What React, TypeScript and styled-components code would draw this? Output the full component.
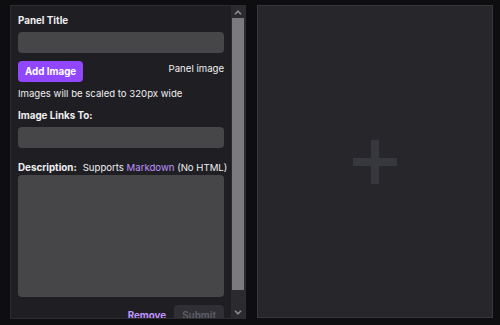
import React from 'react';
import styled, { createGlobalStyle } from 'styled-components';

const GlobalStyle = createGlobalStyle`
  html, body {
    margin: 0;
    padding: 0;
    background: #0e0e10;
    font-family: Inter, "Noto Sans", sans-serif;
    color: #efeff1;
  }
`;

const Page = styled.div`
  display: flex;
  gap: 11px;
  padding: 5px 7px 6px 10px;
  height: 325px;
  box-sizing: border-box;
`;

const EditPanel = styled.div`
  width: 236px;
  height: 314px;
  box-sizing: border-box;
  background: #1f1f23;
  border: 1px solid #2c2c31;
  display: flex;
  overflow: hidden;
`;

const Form = styled.div`
  flex: 1;
  display: flex;
  flex-direction: column;
  padding: 7px 7px 8px 7px;
  min-width: 0;

  & > * {
    flex-shrink: 0;
  }
`;

const Scrollbar = styled.div`
  width: 14px;
  flex: none;
  display: flex;
  flex-direction: column;
  background: #2a2a2f;
`;

const ScrollArrow = styled.div`
  height: 12px;
  flex: none;
  display: flex;
  align-items: center;
  justify-content: center;
`;

const Thumb = styled.div`
  height: 272px;
  flex: none;
  margin: 0 1px;
  background: #7b7b7f;
`;

const Track = styled.div`
  flex: 1;
`;

const Label = styled.div<{ gap?: number }>`
  font-size: 9.8px;
  font-weight: 700;
  line-height: 15px;
  white-space: nowrap;
  margin-bottom: ${(p) => p.gap ?? 4}px;
`;

const Input = styled.div`
  height: 21px;
  border-radius: 4px;
  background: #464649;
`;

const TextArea = styled.div`
  height: 122px;
  border-radius: 4px;
  background: #464649;
`;

const ImageRow = styled.div`
  display: flex;
  justify-content: space-between;
  align-items: flex-start;
  margin-top: 8px;
`;

const PrimaryButton = styled.button`
  height: 21px;
  padding: 0 7px;
  border: none;
  border-radius: 4px;
  background: #9147ff;
  color: #fff;
  font-family: inherit;
  font-size: 9.8px;
  font-weight: 700;
`;

const Hint = styled.div`
  font-size: 9.6px;
  line-height: 15px;
  white-space: nowrap;
`;

const Help = styled(Hint)`
  margin: 4px 0 7px;
`;

const DescRow = styled.div`
  display: flex;
  align-items: baseline;
  gap: 6px;
  margin-top: 12px;
`;

const Link = styled.span`
  color: #bf94ff;
`;

const Actions = styled.div`
  display: flex;
  justify-content: flex-end;
  align-items: center;
  gap: 8px;
  margin-top: 8px;
`;

const TextButton = styled.span`
  color: #bf94ff;
  font-size: 9.8px;
  font-weight: 700;
`;

const DisabledButton = styled.button`
  height: 21px;
  padding: 0 8px;
  border: none;
  border-radius: 4px;
  background: #2f2f35;
  color: #5c5c63;
  font-family: inherit;
  font-size: 9.8px;
  font-weight: 700;
`;

const PreviewPanel = styled.div`
  width: 236px;
  height: 313px;
  box-sizing: border-box;
  background: #26262b;
  border: 1px solid #36363b;
  display: flex;
  align-items: center;
  justify-content: center;
`;

const PlusIcon = () => (
  <svg width="44" height="44" viewBox="0 0 44 44">
    <rect x="18" y="0" width="8" height="44" fill="#37373e" />
    <rect x="0" y="18" width="44" height="8" fill="#37373e" />
  </svg>
);

const Chevron = ({ up }: { up?: boolean }) => (
  <svg width="8" height="5" viewBox="0 0 8 5">
    <path
      d={up ? 'M1 4.2 L4 1.2 L7 4.2' : 'M1 0.8 L4 3.8 L7 0.8'}
      fill="none"
      stroke="#8a8a8f"
      strokeWidth="1.6"
    />
  </svg>
);

export default function App() {
  return (
    <>
      <GlobalStyle />
      <Page>
        <EditPanel>
          <Form>
            <Label>Panel Title</Label>
            <Input />
            <ImageRow>
              <PrimaryButton>Add Image</PrimaryButton>
              <Hint>Panel image</Hint>
            </ImageRow>
            <Help>Images will be scaled to 320px wide</Help>
            <Label>Image Links To:</Label>
            <Input />
            <DescRow>
              <Label gap={0}>Description:</Label>
              <Hint>
                Supports <Link>Markdown</Link> (No HTML)
              </Hint>
            </DescRow>
            <TextArea />
            <Actions>
              <TextButton>Remove</TextButton>
              <DisabledButton>Submit</DisabledButton>
            </Actions>
          </Form>
          <Scrollbar>
            <ScrollArrow>
              <Chevron up />
            </ScrollArrow>
            <Thumb />
            <Track />
            <ScrollArrow>
              <Chevron />
            </ScrollArrow>
          </Scrollbar>
        </EditPanel>
        <PreviewPanel>
          <PlusIcon />
        </PreviewPanel>
      </Page>
    </>
  );
}
